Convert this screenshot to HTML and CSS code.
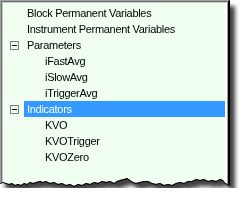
FILE: index.html
```html
<!DOCTYPE html>
<html>
<head>
<meta charset="utf-8">
<link rel="stylesheet" href="styles.css">
</head>
<body>
<div class="wrap">
  <div class="frame">
    <div class="tree">
      <div class="list">
        <div class="row"><span class="exp"></span><span class="label">Block Permanent Variables</span></div>
        <div class="row"><span class="exp"></span><span class="label">Instrument Permanent Variables</span></div>
        <div class="row"><span class="exp"><svg class="box" width="9" height="9" viewBox="0 0 9 9"><rect x="0.5" y="0.5" width="8" height="8" fill="none" stroke="#808080"/><rect x="2" y="4" width="5" height="1" fill="#000"/></svg></span><span class="label">Parameters</span></div>
        <div class="row child"><span class="exp"></span><span class="label">iFastAvg</span></div>
        <div class="row child"><span class="exp"></span><span class="label">iSlowAvg</span></div>
        <div class="row child"><span class="exp"></span><span class="label">iTriggerAvg</span></div>
        <div class="row"><span class="exp"><svg class="box" width="9" height="9" viewBox="0 0 9 9"><rect x="0.5" y="0.5" width="8" height="8" fill="none" stroke="#808080"/><rect x="2" y="4" width="5" height="1" fill="#000"/></svg></span><span class="label selected">Indicators</span></div>
        <div class="row child"><span class="exp"></span><span class="label">KVO</span></div>
        <div class="row child"><span class="exp"></span><span class="label">KVOTrigger</span></div>
        <div class="row child"><span class="exp"></span><span class="label">KVOZero</span></div>
      </div>
    </div>
  </div>
  <svg class="torn" width="230" height="12" viewBox="0 0 230 12">
    <defs>
      <clipPath id="tc">
        <path d="M0,0 L0,7 L3,6 L6,7 L9,8 L12,7 L15,9 L18,8 L21,9 L24,7 L27,8 L30,6 L33,7 L36,6 L40,5 L43,6 L46,5 L50,7 L54,6 L58,8 L62,7 L66,9 L70,8 L74,10 L78,8 L82,9 L86,7 L90,8 L94,6 L98,7 L102,5 L106,6 L110,5 L114,7 L117,5 L120,4 L124,3 L127,2 L130,4 L133,6 L136,7 L140,6 L144,5 L148,5 L152,7 L156,8 L160,7 L164,9 L168,8 L172,9 L176,7 L180,6 L184,7 L188,5 L192,5 L196,3 L200,4 L204,3 L208,5 L212,4 L216,5 L220,3 L223,4 L225,7 L228,8 L230,10 L230,0 Z"/>
      </clipPath>
    </defs>
    <g clip-path="url(#tc)">
      <rect x="0" y="0" width="230" height="12" fill="#f0fff0"/>
      <rect x="0" y="0" width="1" height="12" fill="#a0a0a0"/>
      <rect x="1" y="0" width="1" height="12" fill="#6d6d6d"/>
      <rect x="2" y="0" width="1" height="12" fill="#c8c8c8"/>
      <rect x="225" y="0" width="2" height="12" fill="#ffffff"/>
      <rect x="227" y="0" width="1" height="12" fill="#a0a0a0"/>
      <rect x="228" y="0" width="2" height="12" fill="#000000"/>
    </g>
    <path d="M0,7.5 L3,6.5 L6,7.5 L9,8.5 L12,7.5 L15,9.5 L18,8.5 L21,9.5 L24,7.5 L27,8.5 L30,6.5 L33,7.5 L36,6.5 L40,5.5 L43,6.5 L46,5.5 L50,7.5 L54,6.5 L58,8.5 L62,7.5 L66,9.5 L70,8.5 L74,10.5 L78,8.5 L82,9.5 L86,7.5 L90,8.5 L94,6.5 L98,7.5 L102,5.5 L106,6.5 L110,5.5 L114,7.5 L117,5.5 L120,4.5 L124,3.5 L127,2.5 L130,4.5 L133,6.5 L136,7.5 L140,6.5 L144,5.5 L148,5.5 L152,7.5 L156,8.5 L160,7.5 L164,9.5 L168,8.5 L172,9.5 L176,7.5 L180,6.5 L184,7.5 L188,5.5 L192,5.5 L196,3.5 L200,4.5 L204,3.5 L208,5.5 L212,4.5 L216,5.5 L220,3.5 L223,4.5 L225,7.5 L228,8.5 L230,10" fill="none" stroke="#000" stroke-width="1"/>
  </svg>
</div>
</body>
</html>
```
FILE: styles.css
```css
html, body {
  margin: 0;
  padding: 0;
  background: #ffffff;
}
body {
  font-family: "Liberation Sans", Arial, sans-serif;
  font-size: 11px;
  color: #000;
}
.wrap {
  width: 230px;
  display: flex;
  flex-direction: column;
  filter: drop-shadow(5px 6px 2px rgba(0, 0, 0, 0.75));
}
.frame {
  border-left: 1px solid #a0a0a0;
  border-top: 1px solid #a0a0a0;
  border-right: 2px solid #000;
  background: #f0fff0;
}
.tree {
  border-left: 1px solid #6d6d6d;
  border-top: 1px solid #6d6d6d;
  border-right: 1px solid #a0a0a0;
}
.list {
  border-left: 1px solid #c8c8c8;
  border-top: 1px solid #c8c8c8;
  border-right: 2px solid #fff;
  padding: 2px 0 11px 0;
  display: flex;
  flex-direction: column;
}
.row {
  display: flex;
  height: 16px;
  line-height: 16px;
}
.exp {
  width: 21px;
  flex: none;
  display: flex;
  align-items: flex-start;
}
.box {
  display: block;
  margin: 4px 0 0 7px;
}
.child .exp {
  width: 39px;
}
.label {
  padding-left: 3px;
  letter-spacing: -0.3px;
  white-space: nowrap;
}
.selected {
  flex: 1;
  background: #3399ff;
  color: #fff;
}
.torn {
  display: block;
}
```
